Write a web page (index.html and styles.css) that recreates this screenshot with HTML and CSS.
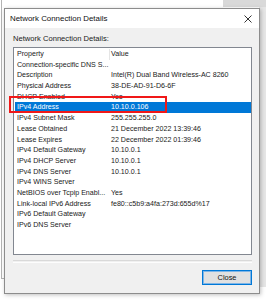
FILE: index.html
```html
<!DOCTYPE html>
<html lang="en">
<head>
    <meta charset="UTF-8">
    <title>Network Connection Details</title>
    <link rel="stylesheet" href="styles.css">
</head>
<body>
    <div class="desk">
        <!-- window behind the dialog -->
        <div class="back-win">
            <div class="back-tab"></div>
            <div class="back-side"></div>
        </div>

        <div class="dialog">
            <div class="titlebar">
                <span class="title">Network Connection Details</span>
                <svg class="x-btn" width="10" height="10" viewBox="0 0 10 10">
                    <path d="M1.5 1.5 L8.5 8.5 M8.5 1.5 L1.5 8.5" stroke="#333" stroke-width="1" fill="none"/>
                </svg>
            </div>
            <div class="content">
                <div class="label">Network Connection Details:</div>
                <div class="list">
                    <div class="row head"><span class="prop">Property</span><span class="val">Value</span></div>
                    <div class="row"><span class="prop">Connection-specific DNS S...</span><span class="val"></span></div>
                    <div class="row"><span class="prop">Description</span><span class="val">Intel(R) Dual Band Wireless-AC 8260</span></div>
                    <div class="row"><span class="prop">Physical Address</span><span class="val">38-DE-AD-91-D6-6F</span></div>
                    <div class="row"><span class="prop">DHCP Enabled</span><span class="val">Yes</span></div>
                    <div class="row selected"><span class="prop">IPv4 Address</span><span class="val">10.10.0.106</span></div>
                    <div class="row"><span class="prop">IPv4 Subnet Mask</span><span class="val">255.255.255.0</span></div>
                    <div class="row"><span class="prop">Lease Obtained</span><span class="val">21 December 2022 13:39:46</span></div>
                    <div class="row"><span class="prop">Lease Expires</span><span class="val">22 December 2022 01:39:46</span></div>
                    <div class="row"><span class="prop">IPv4 Default Gateway</span><span class="val">10.10.0.1</span></div>
                    <div class="row"><span class="prop">IPv4 DHCP Server</span><span class="val">10.10.0.1</span></div>
                    <div class="row"><span class="prop">IPv4 DNS Server</span><span class="val">10.10.0.1</span></div>
                    <div class="row"><span class="prop">IPv4 WINS Server</span><span class="val"></span></div>
                    <div class="row"><span class="prop">NetBIOS over Tcpip Enabl...</span><span class="val">Yes</span></div>
                    <div class="row"><span class="prop">Link-local IPv6 Address</span><span class="val">fe80::c5b9:a4fa:273d:655d%17</span></div>
                    <div class="row"><span class="prop">IPv6 Default Gateway</span><span class="val"></span></div>
                    <div class="row"><span class="prop">IPv6 DNS Server</span><span class="val"></span></div>
                </div>
                <div class="sep"></div>
                <div class="actions">
                    <button class="btn">Close</button>
                </div>
            </div>
        </div>

        <!-- red highlight drawn over the screenshot -->
        <div class="callout"></div>
    </div>
</body>
</html>
```

FILE: styles.css
```css
body {
    margin: 0;
    background: #fff;
    font-family: "Segoe UI", "Liberation Sans", Arial, sans-serif;
    color: #1a1a1a;
}
.desk {
    position: relative;
    width: 266px;
    height: 300px;
    overflow: hidden;
    background: #fff;
}
/* window behind */
.back-win {
    position: absolute;
    left: 1px;
    top: -10px;
    width: 280px;
    height: 288px;
    border-left: 1px solid #b4b4b4;
    border-bottom: 1px solid #b4b4b4;
    background: #fff;
}
.back-tab {
    position: absolute;
    left: 221px;
    top: 0;
    width: 60px;
    height: 17px;
    background: #d9d9d9;
}
.back-side {
    position: absolute;
    left: 257px;
    top: 17px;
    width: 20px;
    height: 280px;
    background: #e6e6e6;
}
.dialog {
    position: absolute;
    left: 4px;
    top: 8px;
    width: 254px;
    height: 284px;
    border: 1px solid #8c8c8c;
    background: #f0f0f0;
    box-shadow: 1px 1px 4px rgba(0, 0, 0, 0.25);
    display: flex;
    flex-direction: column;
}
.titlebar {
    height: 19px;
    background: #fff;
    display: flex;
    align-items: center;
    justify-content: space-between;
    padding: 0 6px 0 5px;
}
.title {
    font-size: 7.9px;
    color: #111;
}
.x-btn {
    display: block;
}
.content {
    flex: 1;
    padding: 6px 7px 0 8px;
    display: flex;
    flex-direction: column;
}
.label {
    font-size: 7.6px;
    line-height: 10px;
    height: 13px;
}
.list {
    height: 208px;
    background: #fff;
    border: 1px solid #828790;
    padding-top: 1px;
    box-sizing: border-box;
}
.row {
    display: flex;
    height: 10.7px;
    line-height: 10.7px;
    font-size: 7.1px;
    white-space: nowrap;
    margin-left: 1px;
}
.row .prop {
    width: 94px;
    padding-left: 2px;
    overflow: hidden;
}
.row .val {
    flex: 1;
}
.row.head {
    color: #222;
}
.row.head .prop {
    border-right: 1px solid #e5e5e5;
    width: 92px;
    margin-right: 1px;
}
.row.selected {
    background: #0078d7;
    color: #fff;
}
.sep {
    margin-top: 5px;
    height: 1px;
    border-top: 1px solid #d9d9d9;
    border-bottom: 1px solid #fdfdfd;
}
.actions {
    display: flex;
    justify-content: flex-end;
    padding-top: 7px;
}
.btn {
    width: 50px;
    height: 15px;
    padding: 0;
    font-family: inherit;
    font-size: 7.4px;
    color: #111;
    background: #e1e1e1;
    border: 1px solid #0078d7;
    box-shadow: inset 0 0 0 1px #7fb5e6;
}
.callout {
    position: absolute;
    left: 9px;
    top: 96px;
    width: 154px;
    height: 13px;
    border: 2.5px solid #f01818;
}
```
